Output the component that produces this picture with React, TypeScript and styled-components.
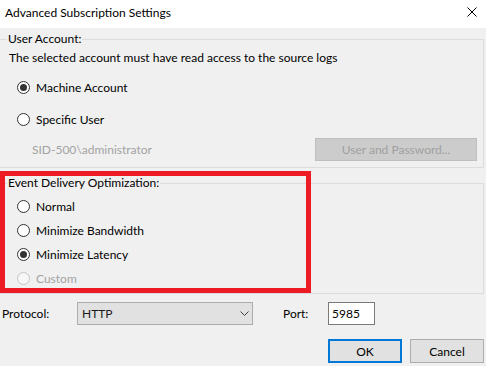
import * as React from 'react';
import styled, { createGlobalStyle } from 'styled-components';

const GlobalStyle = createGlobalStyle`
    html, body {
        margin: 0;
        padding: 0;
        background: #f0f0f0;
    }
    body {
        font-family: Lato, 'Liberation Sans', sans-serif;
        font-size: 12px;
        color: #000;
    }
`;

const Window = styled.div`
    position: relative;
    width: 486px;
    height: 366px;
    overflow: hidden;
    background: #f0f0f0;
`;

const TitleBar = styled.div`
    display: flex;
    align-items: center;
    justify-content: space-between;
    height: 28px;
    padding: 0 9px 0 5px;
    background: #fff;
    box-sizing: border-box;
`;

const Title = styled.span`
    font-size: 12px;
    margin-top: -3px;
`;

const CloseIcon = styled.svg`
    width: 10px;
    height: 10px;
    margin-top: -4px;
`;

const Body = styled.div`
    display: flex;
    flex-direction: column;
`;

const GroupBox = styled.fieldset<{ $top: number; $bottom: number }>`
    margin: ${(p) => p.$top}px 2px 0 -3px;
    padding: 0 6px ${(p) => p.$bottom}px 0;
    border: 1px solid #dcdcdc;
    min-width: 0;
`;

const Legend = styled.legend`
    margin-left: 9px;
    padding: 0 1px;
    line-height: 16px;
`;

const Description = styled.div`
    margin: 3px 0 0 11px;
    line-height: 16px;
`;

const RadioRow = styled.label<{ $disabled?: boolean; $gap?: number }>`
    display: flex;
    align-items: center;
    height: 24px;
    margin-top: ${(p) => p.$gap ?? 0}px;
    padding-left: 19px;
    color: ${(p) => (p.$disabled ? '#a3a3a3' : '#000')};
`;

const RadioCircle = styled.span<{ $checked?: boolean; $disabled?: boolean }>`
    box-sizing: border-box;
    width: 13px;
    height: 13px;
    margin-right: 6px;
    border-radius: 50%;
    border: 1px solid ${(p) => (p.$disabled ? '#c6c6c6' : '#333')};
    background: ${(p) => (p.$disabled ? '#f7f7f7' : '#fff')};
    display: flex;
    align-items: center;
    justify-content: center;

    &::after {
        content: '';
        display: ${(p) => (p.$checked ? 'block' : 'none')};
        width: 7px;
        height: 7px;
        border-radius: 50%;
        background: #333;
    }
`;

const CredentialsRow = styled.div`
    display: flex;
    align-items: center;
    justify-content: space-between;
    margin: 7px 0 0 34px;
    height: 23px;
`;

const MutedText = styled.span`
    color: #a3a3a3;
`;

const DisabledButton = styled.div`
    box-sizing: border-box;
    width: 162px;
    height: 23px;
    display: flex;
    align-items: center;
    justify-content: center;
    background: #cccccc;
    border: 1px solid #bfbfbf;
    color: #a0a0a0;
`;

const FieldRow = styled.div`
    display: flex;
    align-items: center;
    height: 24px;
    margin-top: 7px;
    padding-left: 2px;
`;

const FieldLabel = styled.span<{ $width: number; $gap?: number }>`
    width: ${(p) => p.$width}px;
    margin-left: ${(p) => p.$gap ?? 0}px;
`;

const Select = styled.div`
    box-sizing: border-box;
    width: 176px;
    height: 23px;
    display: flex;
    align-items: center;
    justify-content: space-between;
    padding: 0 3px 0 4px;
    background: #e1e1e1;
    border: 1px solid #adadad;
    color: #1a1a1a;
`;

const Chevron = styled.svg`
    width: 9px;
    height: 5px;
`;

const PortInput = styled.div`
    box-sizing: border-box;
    width: 47px;
    height: 23px;
    display: flex;
    align-items: center;
    padding-left: 3px;
    background: #fff;
    border: 1px solid #7a7a7a;
`;

const ButtonRow = styled.div`
    display: flex;
    justify-content: flex-end;
    gap: 8px;
    margin-top: 14px;
    padding-right: 2px;
`;

const DialogButton = styled.div<{ $default?: boolean }>`
    box-sizing: border-box;
    width: 74px;
    height: 24px;
    display: flex;
    align-items: center;
    justify-content: center;
    background: #e1e1e1;
    border: ${(p) => (p.$default ? '2px solid #0078d7' : '1px solid #adadad')};
`;

const Highlight = styled.div`
    position: absolute;
    left: 0;
    top: 171px;
    width: 311px;
    height: 122px;
    box-sizing: border-box;
    border: 5px solid #ed1c24;
    pointer-events: none;
`;

const Radio: React.FC<{ label: string; checked?: boolean; disabled?: boolean; gap?: number }> = ({
    label,
    checked,
    disabled,
    gap,
}) => (
    <RadioRow $disabled={disabled} $gap={gap}>
        <RadioCircle $checked={checked} $disabled={disabled} />
        {label}
    </RadioRow>
);

export default function App() {
    return (
        <Window>
            <GlobalStyle />
            <TitleBar>
                <Title>Advanced Subscription Settings</Title>
                <CloseIcon viewBox="0 0 10 10">
                    <path d="M0.5 0.5 L9.5 9.5 M9.5 0.5 L0.5 9.5" stroke="#000" strokeWidth="1" />
                </CloseIcon>
            </TitleBar>
            <Body>
                <GroupBox $top={3} $bottom={6}>
                    <Legend>User Account:</Legend>
                    <Description>The selected account must have read access to the source logs</Description>
                    <Radio label="Machine Account" checked gap={9} />
                    <Radio label="Specific User" gap={8} />
                    <CredentialsRow>
                        <MutedText>SID-500\administrator</MutedText>
                        <DisabledButton>User and Password...</DisabledButton>
                    </CredentialsRow>
                </GroupBox>
                <GroupBox $top={7} $bottom={3}>
                    <Legend>Event Delivery Optimization:</Legend>
                    <Radio label="Normal" gap={3} />
                    <Radio label="Minimize Bandwidth" />
                    <Radio label="Minimize Latency" checked />
                    <Radio label="Custom" disabled />
                </GroupBox>
                <FieldRow>
                    <FieldLabel $width={75}>Protocol:</FieldLabel>
                    <Select>
                        HTTP
                        <Chevron viewBox="0 0 9 5">
                            <path d="M0.5 0.5 L4.5 4.5 L8.5 0.5" stroke="#444" fill="none" />
                        </Chevron>
                    </Select>
                    <FieldLabel $width={45} $gap={30}>
                        Port:
                    </FieldLabel>
                    <PortInput>5985</PortInput>
                </FieldRow>
                <ButtonRow>
                    <DialogButton $default>OK</DialogButton>
                    <DialogButton>Cancel</DialogButton>
                </ButtonRow>
            </Body>
            <Highlight />
        </Window>
    );
}
